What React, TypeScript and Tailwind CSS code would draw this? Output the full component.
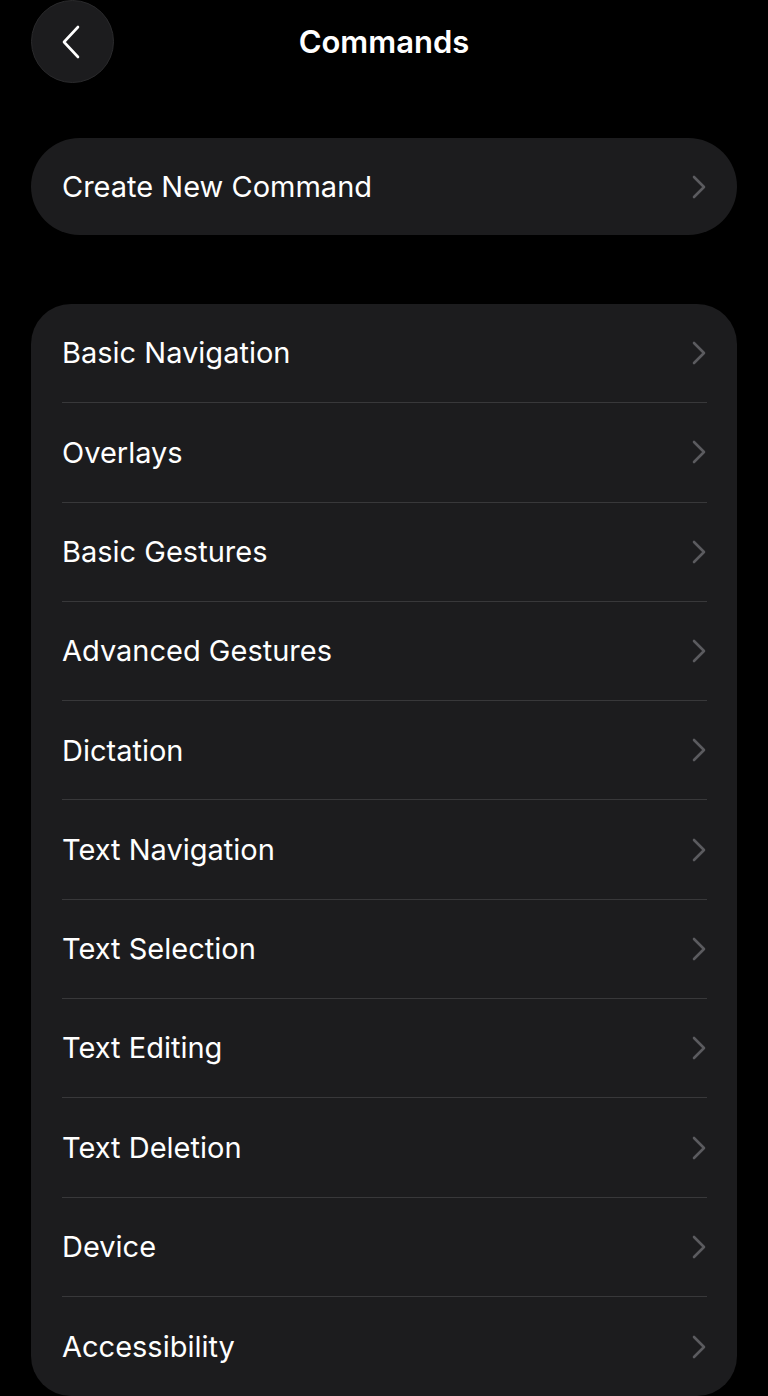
import React from 'react';

const sections = [
  'Basic Navigation',
  'Overlays',
  'Basic Gestures',
  'Advanced Gestures',
  'Dictation',
  'Text Navigation',
  'Text Selection',
  'Text Editing',
  'Text Deletion',
  'Device',
  'Accessibility',
];

function Chevron() {
  return (
    <svg width="16" height="24" viewBox="0 0 16 24" fill="none" className="shrink-0">
      <path d="M3 2 L13 12 L3 22" stroke="#5b5b5f" strokeWidth="2.6" strokeLinecap="round" strokeLinejoin="round" />
    </svg>
  );
}

export default function App() {
  return (
    <div
      className="w-[768px] h-[1396px] bg-black text-white overflow-hidden"
      style={{ fontFamily: 'Inter, "Open Sans", sans-serif' }}
    >
      {/* header */}
      <div className="relative h-[84px] flex items-center justify-center">
        <button className="absolute left-[31px] top-0 w-[83px] h-[83px] rounded-full bg-[#1c1c1e] border border-[#2a2a2c] flex items-center justify-center">
          <svg width="22" height="34" viewBox="0 0 22 34" fill="none" className="-ml-[4px]">
            <path d="M18 2 L4 17 L18 32" stroke="white" strokeWidth="2.6" strokeLinecap="round" strokeLinejoin="round" />
          </svg>
        </button>
        <h1 className="text-[31px] font-semibold">Commands</h1>
      </div>

      <div className="px-[31px] pt-[54px]">
        <div className="h-[97px] rounded-full bg-[#1c1c1e] flex items-center justify-between pl-[31px] pr-[30px]">
          <span className="text-[29px]">Create New Command</span>
          <Chevron />
        </div>

        <div className="mt-[69px] rounded-[40px] bg-[#1c1c1e]">
          {sections.map((name, i) => (
            <div key={name} className="pl-[31px] pr-[30px]">
              <div
                className={
                  'h-[99.3px] flex items-center justify-between ' +
                  (i < sections.length - 1 ? 'border-b border-[#38383a]' : '')
                }
              >
                <span className="text-[29px]">{name}</span>
                <Chevron />
              </div>
            </div>
          ))}
        </div>
      </div>
    </div>
  );
}
